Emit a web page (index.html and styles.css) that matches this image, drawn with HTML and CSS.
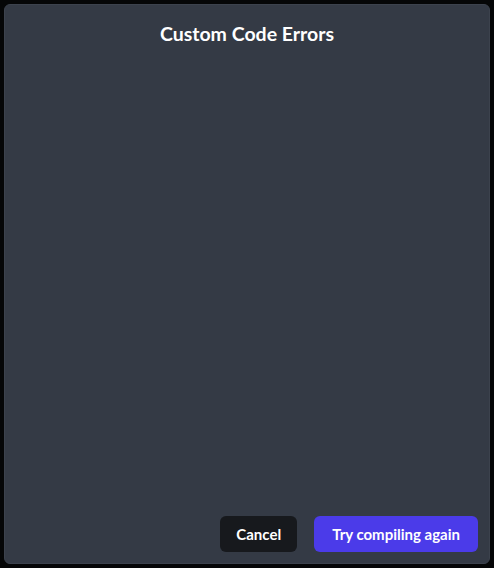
FILE: index.html
```html
<!DOCTYPE html>
<html lang="en">
<head>
    <meta charset="UTF-8">
    <title>Custom Code Errors</title>
    <link rel="stylesheet" href="styles.css">
</head>
<body>
    <div class="modal">
        <h2 class="modal-title">Custom Code Errors</h2>
        <div class="modal-body"></div>
        <div class="modal-actions">
            <button type="button" class="btn btn-cancel">Cancel</button>
            <button type="button" class="btn btn-primary">Try compiling again</button>
        </div>
    </div>
</body>
</html>
```

FILE: styles.css
```css
html, body {
    height: 100%;
}

body {
    margin: 0;
    padding: 4px;
    box-sizing: border-box;
    background-color: #050607;
    font-family: Lato, Arial, sans-serif;
}

.modal {
    height: 100%;
    display: flex;
    flex-direction: column;
    background-color: #343a45;
    border: 1px solid #3c424d;
    border-radius: 6px;
    box-sizing: border-box;
}

.modal-title {
    margin: 0;
    padding-top: 19px;
    text-align: center;
    color: #fff;
    font-size: 19.5px;
    font-weight: 700;
    line-height: 20px;
}

.modal-body {
    flex: 1;
}

.modal-actions {
    display: flex;
    justify-content: flex-end;
    gap: 17px;
    padding: 0 11px 11px 0;
}

.btn {
    height: 36px;
    border: none;
    border-radius: 6px;
    color: #fff;
    font-family: Lato, Arial, sans-serif;
    font-size: 15px;
    font-weight: 700;
    cursor: pointer;
}

.btn-cancel {
    padding: 0 16px;
    background-color: #17191d;
}

.btn-primary {
    padding: 0 18px;
    background-color: #4b3be9;
}
```
